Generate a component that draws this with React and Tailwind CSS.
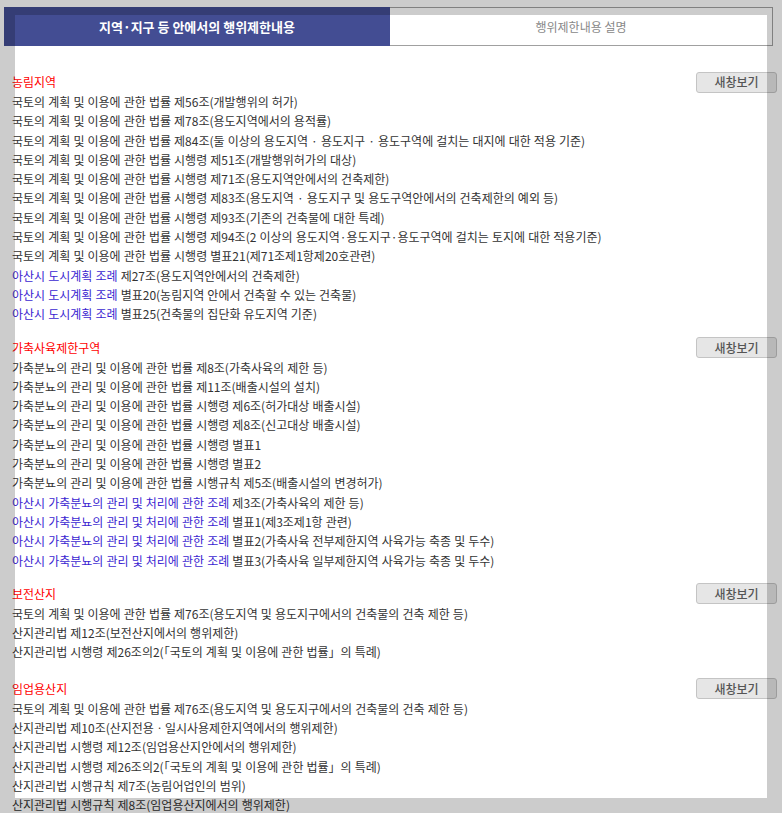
import React from 'react';

const sections = [
  {
    title: '농림지역',
    items: [
      [null, '국토의 계획 및 이용에 관한 법률 제56조(개발행위의 허가)'],
      [null, '국토의 계획 및 이용에 관한 법률 제78조(용도지역에서의 용적률)'],
      [null, '국토의 계획 및 이용에 관한 법률 제84조(둘 이상의 용도지역 · 용도지구 · 용도구역에 걸치는 대지에 대한 적용 기준)'],
      [null, '국토의 계획 및 이용에 관한 법률 시행령 제51조(개발행위허가의 대상)'],
      [null, '국토의 계획 및 이용에 관한 법률 시행령 제71조(용도지역안에서의 건축제한)'],
      [null, '국토의 계획 및 이용에 관한 법률 시행령 제83조(용도지역 · 용도지구 및 용도구역안에서의 건축제한의 예외 등)'],
      [null, '국토의 계획 및 이용에 관한 법률 시행령 제93조(기존의 건축물에 대한 특례)'],
      [null, '국토의 계획 및 이용에 관한 법률 시행령 제94조(2 이상의 용도지역·용도지구·용도구역에 걸치는 토지에 대한 적용기준)'],
      [null, '국토의 계획 및 이용에 관한 법률 시행령 별표21(제71조제1항제20호관련)'],
      ['아산시 도시계획 조례', ' 제27조(용도지역안에서의 건축제한)'],
      ['아산시 도시계획 조례', ' 별표20(농림지역 안에서 건축할 수 있는 건축물)'],
      ['아산시 도시계획 조례', ' 별표25(건축물의 집단화 유도지역 기준)'],
    ],
  },
  {
    title: '가축사육제한구역',
    items: [
      [null, '가축분뇨의 관리 및 이용에 관한 법률 제8조(가축사육의 제한 등)'],
      [null, '가축분뇨의 관리 및 이용에 관한 법률 제11조(배출시설의 설치)'],
      [null, '가축분뇨의 관리 및 이용에 관한 법률 시행령 제6조(허가대상 배출시설)'],
      [null, '가축분뇨의 관리 및 이용에 관한 법률 시행령 제8조(신고대상 배출시설)'],
      [null, '가축분뇨의 관리 및 이용에 관한 법률 시행령 별표1'],
      [null, '가축분뇨의 관리 및 이용에 관한 법률 시행령 별표2'],
      [null, '가축분뇨의 관리 및 이용에 관한 법률 시행규칙 제5조(배출시설의 변경허가)'],
      ['아산시 가축분뇨의 관리 및 처리에 관한 조례', ' 제3조(가축사육의 제한 등)'],
      ['아산시 가축분뇨의 관리 및 처리에 관한 조례', ' 별표1(제3조제1항 관련)'],
      ['아산시 가축분뇨의 관리 및 처리에 관한 조례', ' 별표2(가축사육 전부제한지역 사육가능 축종 및 두수)'],
      ['아산시 가축분뇨의 관리 및 처리에 관한 조례', ' 별표3(가축사육 일부제한지역 사육가능 축종 및 두수)'],
    ],
  },
  {
    title: '보전산지',
    items: [
      [null, '국토의 계획 및 이용에 관한 법률 제76조(용도지역 및 용도지구에서의 건축물의 건축 제한 등)'],
      [null, '산지관리법 제12조(보전산지에서의 행위제한)'],
      [null, '산지관리법 시행령 제26조의2(「국토의 계획 및 이용에 관한 법률」의 특례)'],
    ],
  },
  {
    title: '임업용산지',
    spaced: true,
    items: [
      [null, '국토의 계획 및 이용에 관한 법률 제76조(용도지역 및 용도지구에서의 건축물의 건축 제한 등)'],
      [null, '산지관리법 제10조(산지전용ㆍ일시사용제한지역에서의 행위제한)'],
      [null, '산지관리법 시행령 제12조(임업용산지안에서의 행위제한)'],
      [null, '산지관리법 시행령 제26조의2(「국토의 계획 및 이용에 관한 법률」의 특례)'],
      [null, '산지관리법 시행규칙 제7조(농림어업인의 범위)'],
      [null, '산지관리법 시행규칙 제8조(임업용산지에서의 행위제한)'],
    ],
  },
];

export default function App() {
  return (
    <div className="relative h-screen overflow-hidden bg-white text-[12px] text-[#333] font-['Noto_Sans_CJK_KR','Noto_Sans',sans-serif]">
      {/* tabs */}
      <div className="pl-[4px] pr-[9px] pt-[7px]">
        <div className="flex h-[39px]">
          <div className="flex w-[386px] items-center justify-center bg-[#434d93] text-[13px] font-bold text-white">
            지역·지구 등 안에서의 행위제한내용
          </div>
          <div className="flex flex-1 items-center justify-center border border-l-0 border-[#a0a0a0] text-[#888]">
            행위제한내용 설명
          </div>
        </div>
      </div>

      {/* sections */}
      <div className="flex flex-col gap-[14px] pl-[12px] pr-[5px] pt-[26px] [word-spacing:0.4px]">
        {sections.map(s => (
          <div key={s.title} className={s.spaced ? 'mt-[3px]' : ''}>
            <div className="flex h-[20px] items-center justify-between">
              <span className="text-[#ff0000]">{s.title}</span>
              <button className="h-[21px] w-[81px] rounded-[3px] border border-[#c4c4c4] bg-[#e6e6e6] text-[12px] font-medium text-[#555] [word-spacing:0]">
                새창보기
              </button>
            </div>
            {s.items.map(([link, rest], i) => (
              <div key={i} className="leading-[19.3px] whitespace-nowrap">
                {link && <span className="text-[#3b1fd1]">{link}</span>}
                {rest}
              </div>
            ))}
          </div>
        ))}
      </div>

      {/* dimmed overlay with open window */}
      <div className="pointer-events-none fixed inset-0 overflow-hidden">
        <div className="absolute left-[15px] top-[15px] h-[783px] w-[752px] shadow-[0_0_0_2000px_rgba(0,0,0,0.2)]" />
      </div>
    </div>
  );
}
